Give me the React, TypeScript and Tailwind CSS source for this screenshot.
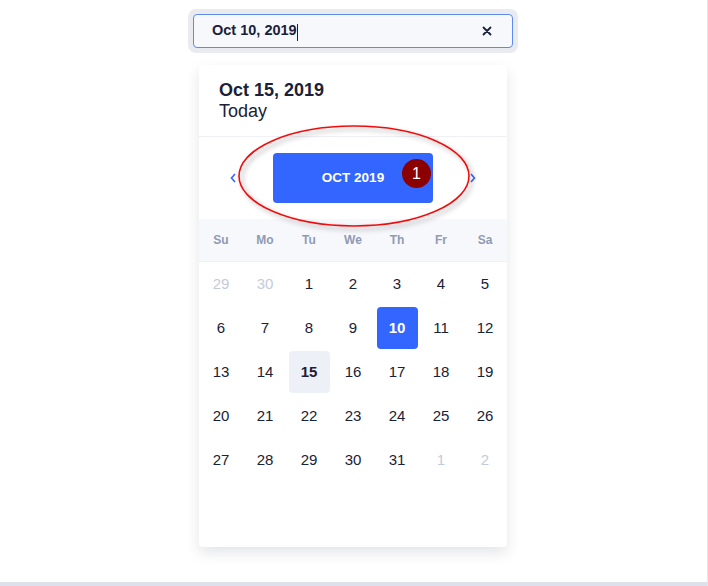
import { useState } from "react"

const WEEKDAYS = ["Su", "Mo", "Tu", "We", "Th", "Fr", "Sa"]

type Day = { n: number; muted?: boolean }

function buildWeeks(): Day[][] {
    const days: Day[] = [{ n: 29, muted: true }, { n: 30, muted: true }]
    for (let i = 1; i <= 31; i++) days.push({ n: i })
    days.push({ n: 1, muted: true }, { n: 2, muted: true })
    const weeks: Day[][] = []
    for (let i = 0; i < days.length; i += 7) weeks.push(days.slice(i, i + 7))
    return weeks
}

export default function App() {
    const [value, setValue] = useState("Oct 10, 2019")
    const weeks = buildWeeks()

    return (
        <div className="relative w-[708px] h-[586px] bg-white border-r border-[#e4e6ee] font-['Liberation_Sans',Arial,sans-serif] text-[#1a2138]">

            {/* input field */}
            <div className="absolute left-[188px] top-[9px] w-[330px] h-[44px] rounded-[8px] bg-[#e9ebf1] p-[5px]">
                <div className="flex items-center h-full rounded-[4px] border border-[#5b8bf0] bg-[#f7f8fc] pl-[18px] pr-[20px]">
                    <input
                        value={value}
                        onChange={(e) => setValue(e.target.value)}
                        className="flex-1 bg-transparent outline-none text-[14.5px] font-bold text-[#1a2138] caret-transparent"
                    />
                    <span className="absolute left-[109px] top-[15px] w-px h-[17px] bg-[#1a2138]" />
                    <svg width="10" height="10" viewBox="0 0 10 10" className="text-[#1a2138]">
                        <path d="M1.5 1.5l7 7M8.5 1.5l-7 7" stroke="currentColor" strokeWidth="1.8" strokeLinecap="round" />
                    </svg>
                </div>
            </div>

            {/* calendar popup */}
            <div className="absolute left-[199px] top-[65px] w-[308px] h-[482px] rounded-[4px] bg-white shadow-[0_6px_14px_rgba(30,40,70,0.12)]">
                <div className="px-[20px] pt-[15px] pb-[14px] border-b border-[#eef0f6]">
                    <div className="text-[18px] font-bold leading-[21px]">Oct 15, 2019</div>
                    <div className="text-[18px] leading-[21px]">Today</div>
                </div>

                <div className="flex items-center justify-between h-[82px] px-[30px]">
                    <svg width="8" height="12" viewBox="0 0 8 12" className="text-[#3366ff]">
                        <path d="M6 2L2.5 6 6 10" fill="none" stroke="currentColor" strokeWidth="1.6" />
                    </svg>
                    <button className="w-[160px] h-[50px] rounded-[4px] bg-[#3366ff] text-white text-[13.5px] font-bold">
                        OCT 2019
                    </button>
                    <svg width="8" height="12" viewBox="0 0 8 12" className="text-[#3366ff]">
                        <path d="M2 2l3.5 4L2 10" fill="none" stroke="currentColor" strokeWidth="1.6" />
                    </svg>
                </div>

                <div className="grid grid-cols-7 h-[43px] items-center bg-[#f7f8fc] border-b border-[#eef0f6]">
                    {WEEKDAYS.map((d) => (
                        <div key={d} className="text-center text-[12px] font-bold text-[#8f9bb3]">{d}</div>
                    ))}
                </div>

                <div className="flex flex-col">
                    {weeks.map((week, wi) => (
                        <div key={wi} className="grid grid-cols-7 h-[44px]">
                            {week.map((d, di) => {
                                const selected = !d.muted && d.n === 10
                                const today = !d.muted && d.n === 15
                                return (
                                    <div key={di} className="flex items-center justify-center">
                                        <div
                                            className={
                                                selected
                                                    ? "flex items-center justify-center w-[41px] h-[42px] rounded-[4px] bg-[#3366ff] text-white font-bold text-[15px]"
                                                    : today
                                                        ? "flex items-center justify-center w-[41px] h-[42px] rounded-[4px] bg-[#edf0f7] font-bold text-[15px]"
                                                        : d.muted
                                                            ? "text-[15px] text-[#c5cbd9]"
                                                            : "text-[15px] text-[#1a2138]"
                                            }
                                        >
                                            {d.n}
                                        </div>
                                    </div>
                                )
                            })}
                        </div>
                    ))}
                </div>
            </div>

            {/* callout ring around the month button */}
            <svg className="absolute left-[228px] top-[118px]" width="260" height="120" viewBox="0 0 260 120">
                <defs>
                    <filter id="ring-shadow" x="-10%" y="-10%" width="130%" height="140%">
                        <feDropShadow dx="3" dy="3" stdDeviation="2.5" floodColor="#000" floodOpacity="0.35" />
                    </filter>
                </defs>
                <ellipse cx="126" cy="58" rx="115" ry="50" fill="none" stroke="#ee1111" strokeWidth="1.6" filter="url(#ring-shadow)" />
            </svg>
            <div className="absolute left-[402px] top-[159px] w-[29px] h-[29px] rounded-full bg-[#8b0000] flex items-center justify-center text-white text-[16px]">
                1
            </div>

            {/* bottom strip */}
            <div className="absolute left-0 right-0 bottom-0 h-[4px] bg-[#dfe1ea]" />
        </div>
    )
}
